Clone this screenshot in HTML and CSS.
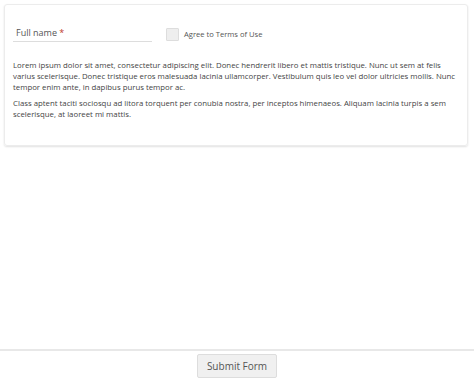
FILE: index.html
```html
<!DOCTYPE html>
<html>
<head>
<title>Form</title>
<link rel="stylesheet" href="styles.css">
</head>
<body>
<div class="page">
<div class="card">
<div class="row">
<div class="field">
<div class="input">Full name <span class="req">*</span></div>
</div>
<label class="check"><span class="box"></span>Agree to Terms of Use</label>
</div>
<p>Lorem ipsum dolor sit amet, consectetur adipiscing elit. Donec hendrerit libero et mattis tristique. Nunc ut sem at felis varius scelerisque. Donec tristique eros malesuada lacinia ullamcorper. Vestibulum quis leo vel dolor ultricies mollis. Nunc tempor enim ante, in dapibus purus tempor ac.</p>
<p>Class aptent taciti sociosqu ad litora torquent per conubia nostra, per inceptos himenaeos. Aliquam lacinia turpis a sem scelerisque, at laoreet mi mattis.</p>
</div>
</div>
<div class="footer">
<button class="submit">Submit Form</button>
</div>
</body>
</html>
```

FILE: styles.css
```css
html, body { margin: 0; height: 100%; }
body {
font-family: "Open Sans", sans-serif;
color: #444;
background: #fff;
display: flex;
flex-direction: column;
}
.page {
flex: 1;
padding: 4px 6px 0 4px;
}
.card {
border: 1px solid #ececec;
border-radius: 3px;
box-shadow: 0 1px 2px rgba(0,0,0,0.12);
padding: 21px 8px 20px 8px;
}
.row {
display: flex;
align-items: center;
gap: 14px;
margin-bottom: 18px;
}
.field {
width: 139px;
}
.input {
font-size: 9px;
color: #555;
padding: 0 0 1px 3px;
border-bottom: 1px solid #ddd;
line-height: 14px;
}
.req { color: #c0392b; }
.check {
display: flex;
align-items: center;
font-size: 7.6px;
color: #555;
gap: 5px;
}
.box {
width: 11px;
height: 11px;
background: #eee;
border: 1px solid #ddd;
border-radius: 1px;
}
p {
font-size: 7.8px;
line-height: 11px;
margin: 0 0 5px 0;
color: #444;
}
.footer {
border-top: 2px solid #e8e8e8;
height: 25px;
display: flex;
justify-content: center;
align-items: flex-start;
padding-top: 3px;
}
.submit {
font-family: "Open Sans", sans-serif;
font-size: 10px;
color: #555;
background: #f0f0f0;
border: 1px solid #ddd;
border-radius: 2px;
width: 80px;
height: 24px;
}
```
